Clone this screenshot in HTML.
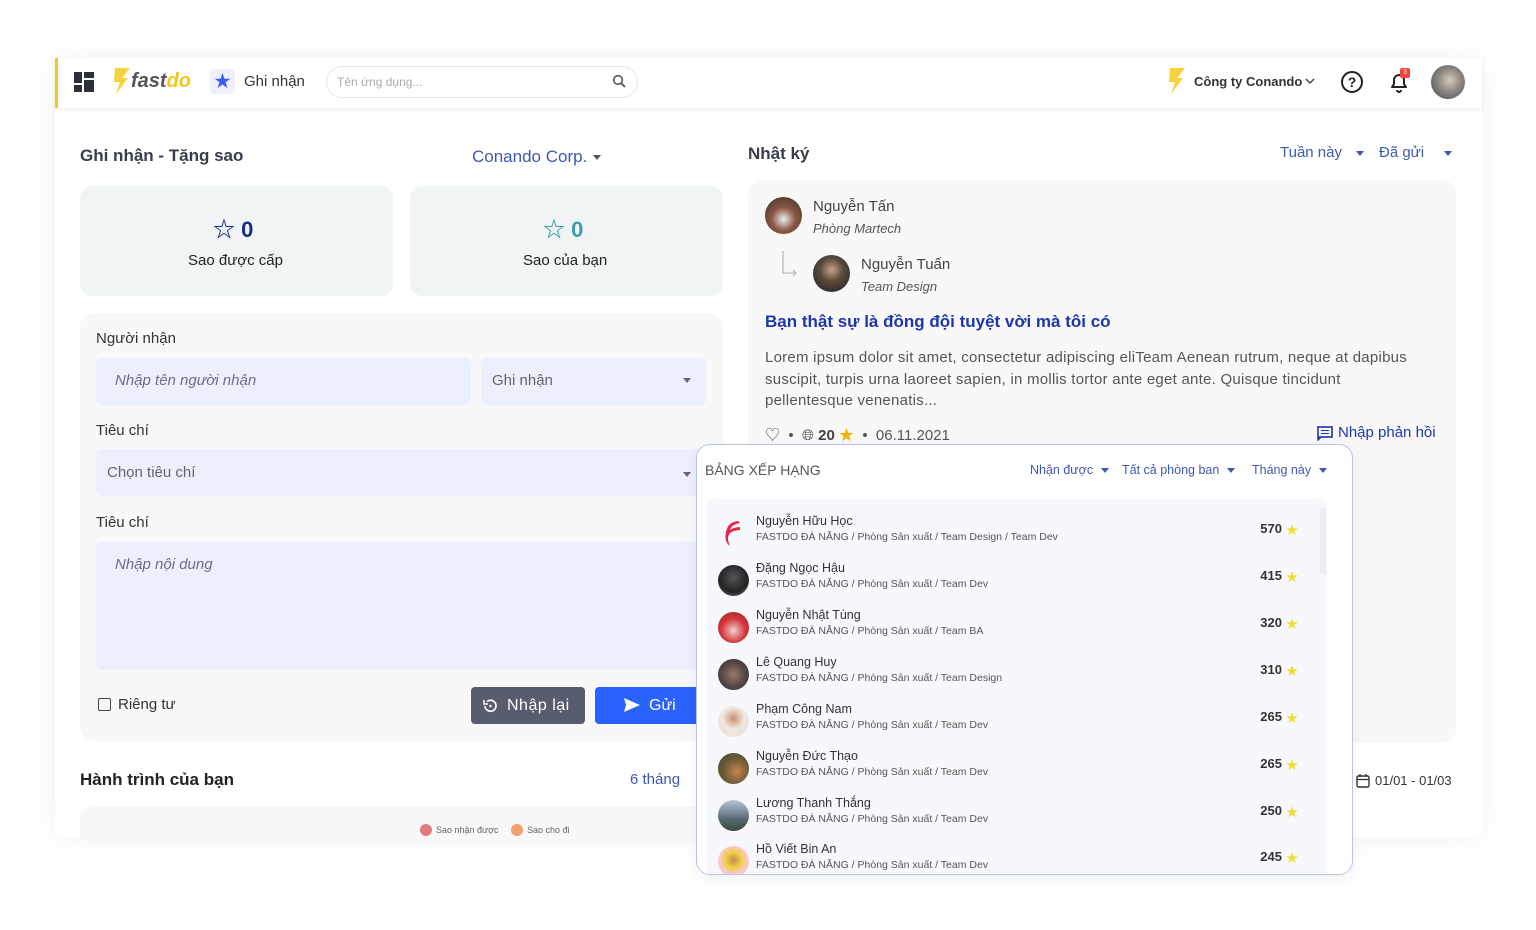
<!DOCTYPE html>
<html><head><meta charset="utf-8"><style>
*{box-sizing:border-box;margin:0;padding:0}
body{width:1536px;height:930px;background:#fff;font-family:"Liberation Sans","Noto Sans CJK SC",sans-serif;position:relative;overflow:hidden;color:#333}
.a{position:absolute}
.card{left:55px;top:58px;width:1427px;height:780px;background:#fff;box-shadow:0 0 30px rgba(0,0,0,.06);border-radius:4px}
.hdr{left:55px;top:58px;width:1427px;height:50px;border-left:3px solid #f5c518;box-shadow:0 2px 4px rgba(0,0,0,.06);background:#fff}
.blue{color:#3f51b5}
.input{background:#eceffd;border-radius:6px}
.ph{font-style:italic;color:#6b6f86;font-size:15px}
.row{position:absolute;left:718px;height:40px;width:600px}
.row .av{position:absolute;left:0;top:4px;width:31px;height:31px;border-radius:50%}
.row .n{position:absolute;left:38px;top:0;font-size:12.5px;color:#333}
.row .s{position:absolute;left:38px;top:17px;font-size:10.5px;color:#555}
.row .p{position:absolute;right:36px;top:7px;font-size:13px;color:#333;font-weight:bold}
.row .st{position:absolute;right:20px;top:7px;color:#f0dc30;font-size:12px}
.tri{display:inline-block;width:0;height:0;border-left:4px solid transparent;border-right:4px solid transparent;border-top:5px solid currentColor;vertical-align:middle;margin-left:6px}
</style></head><body>
<div class="a card"></div>
<div class="a hdr"></div>
<!-- header -->
<svg class="a" style="left:74px;top:72px" width="20" height="20"><rect x="0" y="0" width="8" height="11" fill="#2b2f3a"/><rect x="10" y="0" width="10" height="6" fill="#2b2f3a"/><rect x="0" y="13" width="8" height="7" fill="#2b2f3a"/><rect x="10" y="8" width="10" height="12" fill="#2b2f3a"/></svg>
<svg class="a" style="left:112px;top:68px" width="20" height="26"><polygon points="3,0 18,0 10,10 16,10 4,26 8,14 2,14" fill="#f7d23a"/></svg>
<div class="a" style="left:131px;top:70px;font-size:20px;font-style:italic;font-weight:bold;color:#555">fast<span style="color:#f5c518">do</span></div>
<div class="a" style="left:210px;top:69px;width:25px;height:25px;background:#eef1fb;border-radius:4px;color:#3d5afe;text-align:center;font-size:17px;line-height:25px">★</div>
<div class="a" style="left:244px;top:73px;font-size:15px;color:#333">Ghi nhận</div>
<div class="a" style="left:326px;top:66px;width:312px;height:32px;border:1px solid #e6e6e6;border-radius:16px"></div>
<div class="a" style="left:337px;top:75px;font-size:12px;color:#aaa">Tên ứng dụng...</div>
<svg class="a" style="left:612px;top:74px" width="14" height="14"><circle cx="6" cy="6" r="4.3" stroke="#555" stroke-width="1.6" fill="none"/><line x1="9" y1="9" x2="13" y2="13" stroke="#555" stroke-width="1.8"/></svg>
<svg class="a" style="left:1167px;top:68px" width="20" height="26"><polygon points="3,0 18,0 10,10 16,10 4,26 8,14 2,14" fill="#f7d23a"/></svg>
<div class="a" style="left:1194px;top:74px;font-size:13px;font-weight:bold;color:#333">Công ty Conando</div>
<svg class="a" style="left:1305px;top:78px" width="10" height="7"><polyline points="1,1 5,5 9,1" stroke="#444" stroke-width="1.5" fill="none"/></svg>
<svg class="a" style="left:1340px;top:70px" width="24" height="24"><circle cx="12" cy="12" r="10" stroke="#222" stroke-width="2" fill="none"/><text x="12" y="17" text-anchor="middle" font-size="14" font-weight="bold" fill="#222" font-family="Liberation Sans">?</text></svg>
<svg class="a" style="left:1388px;top:70px" width="22" height="24"><path d="M4 17 L6 14 L6 10 A5 5 0 0 1 16 10 L16 14 L18 17 Z" stroke="#222" stroke-width="2" fill="none" stroke-linejoin="round"/><path d="M9 20 a2 2 0 0 0 4 0" stroke="#222" stroke-width="2" fill="none"/></svg>
<div class="a" style="left:1400px;top:68px;width:10px;height:10px;background:#f44336;border-radius:2px;color:#fff;font-size:7px;text-align:center;line-height:10px">3</div>
<div class="a" style="left:1431px;top:65px;width:34px;height:34px;border-radius:50%;background:radial-gradient(circle at 55% 45%,#d9c9b8 0,#8b8680 45%,#3e4a4e 100%)"></div>

<!-- left -->
<div class="a" style="left:80px;top:146px;font-size:17px;font-weight:bold;color:#3a3d4c">Ghi nhận - Tặng sao</div>
<div class="a blue" style="left:472px;top:147px;font-size:17px;color:#3f58b0">Conando Corp.<span class="tri" style="color:#555"></span></div>
<div class="a" style="left:80px;top:186px;width:313px;height:110px;background:#f0f4f4;border-radius:12px"></div>
<div class="a" style="left:410px;top:186px;width:313px;height:110px;background:#f0f4f4;border-radius:12px"></div>
<div class="a" style="left:213px;top:212px;font-size:22px;color:#1a2a8c;font-weight:bold">☆ 0</div>
<div class="a" style="left:188px;top:252px;font-size:15px;color:#222">Sao được cấp</div>
<div class="a" style="left:543px;top:212px;font-size:22px;color:#3aa0a8;font-weight:bold">☆ 0</div>
<div class="a" style="left:523px;top:252px;font-size:15px;color:#222">Sao của bạn</div>

<div class="a" style="left:80px;top:313px;width:643px;height:428px;background:#f8f8f9;border-radius:14px"></div>
<div class="a" style="left:96px;top:330px;font-size:15px;color:#333">Người nhận</div>
<div class="a input" style="left:96px;top:358px;width:375px;height:47px"></div>
<div class="a ph" style="left:115px;top:372px">Nhập tên người nhận</div>
<div class="a input" style="left:481px;top:358px;width:225px;height:47px"></div>
<div class="a" style="left:492px;top:372px;font-size:15px;color:#666">Ghi nhận</div>
<div class="a" style="left:683px;top:375px;color:#666;font-size:10px"><span class="tri" style="margin:0"></span></div>
<div class="a" style="left:96px;top:422px;font-size:15px;color:#333">Tiêu chí</div>
<div class="a input" style="left:96px;top:449px;width:610px;height:47px"></div>
<div class="a" style="left:107px;top:464px;font-size:15px;color:#666">Chọn tiêu chí</div>
<div class="a" style="left:683px;top:466px;color:#666"><span class="tri" style="margin:0"></span></div>
<div class="a" style="left:96px;top:514px;font-size:15px;color:#333">Tiêu chí</div>
<div class="a input" style="left:96px;top:542px;width:610px;height:128px"></div>
<div class="a ph" style="left:115px;top:556px">Nhập nội dung</div>
<div class="a" style="left:98px;top:698px;width:13px;height:13px;border:1.5px solid #444;border-radius:2px"></div>
<div class="a" style="left:118px;top:696px;font-size:15px;color:#333">Riêng tư</div>
<div class="a" style="left:471px;top:687px;width:114px;height:37px;background:#585d6e;border-radius:4px;color:#fff;font-size:16px;line-height:37px;padding-left:36px;letter-spacing:.5px">Nhập lại</div>
<svg class="a" style="left:482px;top:698px" width="16" height="16"><path d="M3 8 A5.5 5.5 0 1 0 5 3.5" stroke="#fff" stroke-width="1.7" fill="none"/><polyline points="2,2 2,6 6,6" stroke="#fff" stroke-width="1.5" fill="none"/><circle cx="8.5" cy="8" r="1.3" fill="#fff"/></svg>
<div class="a" style="left:595px;top:687px;width:110px;height:37px;background:#2962ff;border-radius:4px;color:#fff;font-size:16px;line-height:37px;padding-left:54px">Gửi</div>
<svg class="a" style="left:624px;top:698px" width="16" height="14"><polygon points="0,0 16,7 0,14 2,7" fill="#fff"/></svg>
<div class="a" style="left:80px;top:770px;font-size:17px;font-weight:bold;color:#222">Hành trình của bạn</div>
<div class="a" style="left:630px;top:771px;font-size:15px;color:#3f58b0">6 tháng</div>
<div class="a" style="left:80px;top:807px;width:643px;height:31px;background:#f8f8f9;border-radius:12px 12px 0 0"></div>
<div class="a" style="left:420px;top:824px;width:12px;height:12px;border-radius:50%;background:#e07a80"></div>
<div class="a" style="left:436px;top:825px;font-size:9px;color:#666">Sao nhận được</div>
<div class="a" style="left:511px;top:824px;width:12px;height:12px;border-radius:50%;background:#f4a06a"></div>
<div class="a" style="left:527px;top:825px;font-size:9px;color:#666">Sao cho đi</div>

<!-- right -->
<div class="a" style="left:748px;top:144px;font-size:17px;font-weight:bold;color:#3a3d4c">Nhật ký</div>
<div class="a" style="left:1280px;top:144px;font-size:15px;color:#3f58b0">Tuần này<span class="tri" style="margin-left:14px"></span></div>
<div class="a" style="left:1379px;top:144px;font-size:15px;color:#3f58b0">Đã gửi<span class="tri" style="margin-left:20px"></span></div>
<div class="a" style="left:748px;top:180px;width:708px;height:563px;background:#f8f8f9;border-radius:14px"></div>
<div class="a" style="left:765px;top:197px;width:37px;height:37px;border-radius:50%;background:radial-gradient(circle at 50% 60%,#eee 0,#8a5a48 40%,#3a2a26 100%)"></div>
<div class="a" style="left:813px;top:198px;font-size:15px;color:#444">Nguyễn Tấn</div>
<div class="a" style="left:813px;top:221px;font-size:13px;font-style:italic;color:#555">Phòng Martech</div>
<svg class="a" style="left:780px;top:250px" width="20" height="28"><polyline points="3,1 3,23 16,23" stroke="#bbb" stroke-width="1.3" fill="none"/><polyline points="13,20 16,23 13,26" stroke="#bbb" stroke-width="1.3" fill="none"/></svg>
<div class="a" style="left:813px;top:255px;width:37px;height:37px;border-radius:50%;background:radial-gradient(circle at 50% 40%,#c9a388 0,#5a4a3c 40%,#1e1e1e 100%)"></div>
<div class="a" style="left:861px;top:256px;font-size:15px;color:#444">Nguyễn Tuấn</div>
<div class="a" style="left:861px;top:279px;font-size:13px;font-style:italic;color:#555">Team Design</div>
<div class="a" style="left:765px;top:312px;font-size:17px;font-weight:bold;color:#1e36a8">Bạn thật sự là đồng đội tuyệt vời mà tôi có</div>
<div class="a" style="left:765px;top:347px;width:665px;font-size:15px;line-height:21.5px;color:#555;letter-spacing:.25px">Lorem ipsum dolor sit amet, consectetur adipiscing eliTeam Aenean rutrum, neque at dapibus suscipit, turpis urna laoreet sapien, in mollis tortor ante eget ante. Quisque tincidunt pellentesque venenatis...</div>
<div class="a" style="left:765px;top:424px;font-size:15px;color:#555">♡ &nbsp;•&nbsp; <span style="color:#444">🌐︎</span> <b style="color:#444">20</b> <span style="color:#f0b400">★</span> &nbsp;•&nbsp; 06.11.2021</div>
<svg class="a" style="left:1317px;top:426px" width="16" height="15"><rect x="1" y="1" width="14" height="10" stroke="#1e36a8" stroke-width="1.6" fill="none"/><polyline points="1,11 1,14 4,11" stroke="#1e36a8" stroke-width="1.4" fill="none"/><line x1="4" y1="4.5" x2="12" y2="4.5" stroke="#1e36a8"/><line x1="4" y1="7.5" x2="12" y2="7.5" stroke="#1e36a8"/></svg>
<div class="a" style="left:1338px;top:424px;font-size:15px;color:#1e36a8">Nhập phản hồi</div>
<svg class="a" style="left:1356px;top:773px" width="14" height="15"><rect x="1" y="3" width="12" height="11" rx="1.5" stroke="#333" stroke-width="1.4" fill="none"/><line x1="1" y1="6.5" x2="13" y2="6.5" stroke="#333" stroke-width="1.3"/><line x1="4" y1="1" x2="4" y2="4" stroke="#333" stroke-width="1.3"/><line x1="10" y1="1" x2="10" y2="4" stroke="#333" stroke-width="1.3"/></svg>
<div class="a" style="left:1375px;top:773px;font-size:13px;color:#333">01/01 - 01/03</div>

<!-- leaderboard -->
<div class="a" style="left:696px;top:444px;width:657px;height:431px;background:#fff;border:1.5px solid #b9c4f5;border-radius:14px;box-shadow:0 4px 14px rgba(0,0,0,.06)"></div>
<div class="a" style="left:705px;top:462px;font-size:14px;color:#555">BẢNG XẾP HẠNG</div>
<div class="a" style="left:1030px;top:463px;font-size:12.5px;color:#3f58b0">Nhận được<span class="tri" style="margin-left:8px"></span></div>
<div class="a" style="left:1122px;top:463px;font-size:12.5px;color:#3f58b0">Tất cả phòng ban<span class="tri" style="margin-left:8px"></span></div>
<div class="a" style="left:1252px;top:463px;font-size:12.5px;color:#3f58b0">Tháng này<span class="tri" style="margin-left:8px"></span></div>
<div class="a" style="left:706px;top:499px;width:621px;height:375px;background:#f7f8fb;border-radius:6px 6px 0 0"></div>
<div class="a" style="left:1320px;top:508px;width:6px;height:66px;background:#eceef2"></div>

<div class="row" style="top:514px"><svg class="av" viewBox="0 0 31 31" style="background:none"><path d="M20 3 Q10 4 8 14 Q6 24 12 28 Q8 20 12 15 Q16 12 22 12 L22 9 Q16 9 12 12 Q14 6 22 5 Z" fill="#e8224a"/></svg><div class="n">Nguyễn Hữu Học</div><div class="s">FASTDO ĐÀ NẴNG / Phòng Sản xuất / Team Design / Team Dev</div><div class="p">570</div><div class="st">★</div></div>
<div class="row" style="top:561px"><div class="av" style="background:radial-gradient(circle at 50% 40%,#555 0,#222 60%,#888 100%)"></div><div class="n">Đặng Ngọc Hậu</div><div class="s">FASTDO ĐÀ NẴNG / Phòng Sản xuất / Team Dev</div><div class="p">415</div><div class="st">★</div></div>
<div class="row" style="top:608px"><div class="av" style="background:radial-gradient(circle at 50% 60%,#f0d0d0 0,#d2373c 50%,#a02028 100%)"></div><div class="n">Nguyễn Nhật Tùng</div><div class="s">FASTDO ĐÀ NẴNG / Phòng Sản xuất / Team BA</div><div class="p">320</div><div class="st">★</div></div>
<div class="row" style="top:655px"><div class="av" style="background:radial-gradient(circle at 50% 50%,#9a7a6a 0,#5a4a48 50%,#2a2a30 100%)"></div><div class="n">Lê Quang Huy</div><div class="s">FASTDO ĐÀ NẴNG / Phòng Sản xuất / Team Design</div><div class="p">310</div><div class="st">★</div></div>
<div class="row" style="top:702px"><div class="av" style="background:radial-gradient(circle at 50% 40%,#c89070 0,#f0e8e0 45%,#e8e0d8 100%)"></div><div class="n">Phạm Công Nam</div><div class="s">FASTDO ĐÀ NẴNG / Phòng Sản xuất / Team Dev</div><div class="p">265</div><div class="st">★</div></div>
<div class="row" style="top:749px"><div class="av" style="background:radial-gradient(circle at 60% 60%,#c8844a 0,#6a5a38 50%,#3a4a2a 100%)"></div><div class="n">Nguyễn Đức Thạo</div><div class="s">FASTDO ĐÀ NẴNG / Phòng Sản xuất / Team Dev</div><div class="p">265</div><div class="st">★</div></div>
<div class="row" style="top:796px"><div class="av" style="background:linear-gradient(#b8c8d8,#5a6a78 60%,#3a4a3a)"></div><div class="n">Lương Thanh Thắng</div><div class="s">FASTDO ĐÀ NẴNG / Phòng Sản xuất / Team Dev</div><div class="p">250</div><div class="st">★</div></div>
<div class="row" style="top:842px;height:32px;overflow:hidden"><div class="av" style="background:radial-gradient(circle at 50% 45%,#c88858 0,#f0d040 35%,#f8c8d0 60%)"></div><div class="n">Hồ Viết Bin An</div><div class="s">FASTDO ĐÀ NẴNG / Phòng Sản xuất / Team Dev</div><div class="p">245</div><div class="st">★</div></div>
</body></html>
